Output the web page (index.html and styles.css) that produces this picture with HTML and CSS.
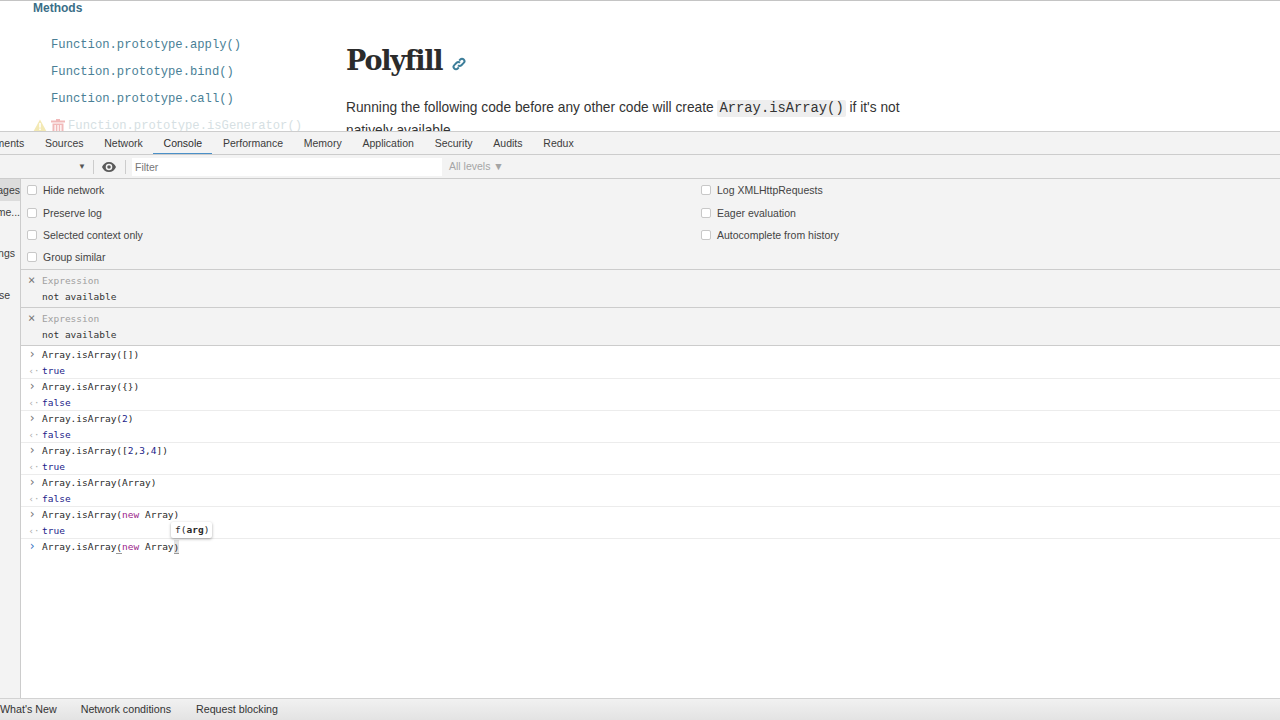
FILE: index.html
```html
<!DOCTYPE html>
<html lang="en">
<head>
<meta charset="utf-8">
<title>Array.isArray()</title>
<link rel="stylesheet" href="styles.css">
</head>
<body>
<section class="page">
  <aside class="toc">
    <h2 class="toc-title">Methods</h2>
    <ul class="toc-list">
      <li>Function.prototype.apply()</li>
      <li>Function.prototype.bind()</li>
      <li>Function.prototype.call()</li>
      <li class="deprecated">
        <svg class="i-warn" width="14" height="13" viewBox="0 0 14 13"><path d="M7 0.5 L13.6 12.5 H0.4 Z" fill="#f3e9b4"/><rect x="6.2" y="4" width="1.6" height="4.6" fill="#fff"/><rect x="6.2" y="9.5" width="1.6" height="1.6" fill="#fff"/></svg>
        <svg class="i-trash" width="14" height="15" viewBox="0 0 14 15"><path d="M5 0h4v1.500h5v2H0v-2h5zM1.500 4.500h11V15h-11zM3.500 6v7.500h1.300V6zM6.400 6v7.500h1.300V6zM9.200 6v7.500h1.300V6z" fill="#f1b9b9" fill-rule="evenodd"/></svg>
        <span class="dep-text">Function.prototype.isGenerator()</span>
      </li>
    </ul>
  </aside>
  <article class="doc">
    <h1 class="doc-title">Polyfill
      <svg class="i-link" width="14" height="14" viewBox="0 0 14 14" fill="none" stroke="#3d7e9a" stroke-width="2"><path d="M6 8.200a2.400 2.400 0 0 0 3.400 0l2.300-2.300a2.400 2.400 0 0 0-3.400-3.400L7.200 3.600"/><path d="M8 5.800a2.400 2.400 0 0 0-3.400 0L2.300 8.100a2.400 2.400 0 0 0 3.400 3.400l1.100-1.100"/></svg>
    </h1>
    <p class="doc-text">Running the following code before any other code will create <code class="chip">Array.isArray()</code> if it's not natively available.</p>
  </article>
</section>

<section class="devtools">
  <nav class="tabs">
    <span class="tab tab-first">Elements</span>
    <span class="tab">Sources</span>
    <span class="tab">Network</span>
    <span class="tab active">Console</span>
    <span class="tab">Performance</span>
    <span class="tab">Memory</span>
    <span class="tab">Application</span>
    <span class="tab">Security</span>
    <span class="tab">Audits</span>
    <span class="tab">Redux</span>
  </nav>
  <div class="toolbar">
    <span class="ctx-arrow">▼</span>
    <span class="sep"></span>
    <svg class="i-eye" width="14" height="10" viewBox="0 0 14 10"><path d="M7 0C3.800 0 1.200 2 0 5c1.200 3 3.800 5 7 5s5.800-2 7-5c-1.200-3-3.800-5-7-5zm0 8.300A3.300 3.300 0 1 1 7 1.700a3.300 3.300 0 0 1 0 6.600zM7 3.200a1.800 1.800 0 1 0 0 3.600 1.800 1.800 0 0 0 0-3.600z" fill="#5a5a5a"/></svg>
    <span class="sep"></span>
    <div class="filter">Filter</div>
    <span class="levels">All levels ▼</span>
  </div>
  <div class="console">
    <aside class="side">
      <div class="side-item selected">Messages</div>
      <div class="side-item">1 user me...</div>
      <div class="side-item warn">Warnings</div>
      <div class="side-item verb">Verbose</div>
    </aside>
    <div class="panel">
      <div class="settings">
        <div class="set-col">
          <label class="check"><span class="box"></span>Hide network</label>
          <label class="check"><span class="box"></span>Preserve log</label>
          <label class="check"><span class="box"></span>Selected context only</label>
          <label class="check"><span class="box"></span>Group similar</label>
        </div>
        <div class="set-col">
          <label class="check"><span class="box"></span>Log XMLHttpRequests</label>
          <label class="check"><span class="box"></span>Eager evaluation</label>
          <label class="check"><span class="box"></span>Autocomplete from history</label>
        </div>
      </div>
      <div class="watch">
        <div class="watch-line"><span class="x">×</span><span class="w-name">Expression</span></div>
        <div class="w-val">not available</div>
      </div>
      <div class="watch">
        <div class="watch-line"><span class="x">×</span><span class="w-name">Expression</span></div>
        <div class="w-val">not available</div>
      </div>
      <div class="log">
        <div class="entry">
          <div class="ln"><span class="pr">›</span>Array.isArray([])</div>
          <div class="ln"><span class="ret">‹·</span><span class="kw">true</span></div>
        </div>
        <div class="entry">
          <div class="ln"><span class="pr">›</span>Array.isArray({})</div>
          <div class="ln"><span class="ret">‹·</span><span class="kw">false</span></div>
        </div>
        <div class="entry">
          <div class="ln"><span class="pr">›</span>Array.isArray(<span class="kw">2</span>)</div>
          <div class="ln"><span class="ret">‹·</span><span class="kw">false</span></div>
        </div>
        <div class="entry">
          <div class="ln"><span class="pr">›</span>Array.isArray([<span class="kw">2</span>,<span class="kw">3</span>,<span class="kw">4</span>])</div>
          <div class="ln"><span class="ret">‹·</span><span class="kw">true</span></div>
        </div>
        <div class="entry">
          <div class="ln"><span class="pr">›</span>Array.isArray(Array)</div>
          <div class="ln"><span class="ret">‹·</span><span class="kw">false</span></div>
        </div>
        <div class="entry">
          <div class="ln"><span class="pr">›</span>Array.isArray(<span class="new">new</span> Array)</div>
          <div class="ln"><span class="ret">‹·</span><span class="kw">true</span></div>
        </div>
        <div class="prompt">
          <div class="ln"><span class="pr blue">›</span>Array.isArray<span class="match">(</span><span class="new">new</span> Array<span class="match close">)</span></div>
          <div class="hint">f(<b>arg</b>)</div>
        </div>
      </div>
    </div>
  </div>
  <footer class="drawer">
    <span class="d-tab d-first">What's New</span>
    <span class="d-tab">Network conditions</span>
    <span class="d-tab">Request blocking</span>
  </footer>
</section>
</body>
</html>
```

FILE: styles.css
```css
* { box-sizing: border-box; }
html, body { margin: 0; height: 100%; }
body {
  width: 1280px; height: 720px; overflow: hidden;
  display: flex; flex-direction: column;
  font-family: "Liberation Sans", Arial, sans-serif;
  background: #fff; color: #303030;
}
.page {
  height: 131px; flex: none; overflow: hidden;
  display: flex; border-top: 1px solid #c4c4c4;
}
.toc { width: 346px; flex: none; padding-left: 33px; }
.toc-title { margin: 0; font-size: 12px; line-height: 14px; font-weight: bold; color: #3a6e87; }
.toc-list { list-style: none; margin: 17px 0 0; padding: 0; font: 12.2px/27px "Liberation Mono", monospace; color: #4a7f96; }
.toc-list li { padding-left: 18px; height: 27px; white-space: nowrap; }
.toc-list .deprecated { padding-left: 0; display: flex; align-items: center; }
.i-warn { margin: 0 4px 3px 0; }
.i-trash { margin: 0 3px 1px 0; }
.dep-text { color: #d6dfe3; }
.doc { width: 560px; flex: none; }
.doc-title {
  margin: 40px 0 0; font: bold 27px/40px "DejaVu Serif", serif; color: #2b2b2b;
  letter-spacing: -1.2px; display: flex; align-items: center; gap: 10px; height: 40px;
}
.i-link { margin-top: 5px; }
.doc-text { margin: 15px 0 0; font-size: 13.75px; line-height: 23px; color: #333; width: 560px; }
.chip { font: 13.8px "Liberation Mono", monospace; background: #eee; padding: 1px 2px; border-radius: 2px; }

.devtools { flex: 1; min-height: 0; display: flex; flex-direction: column; background: #f3f3f3; border-top: 1px solid #cdcdcd; }
.tabs { height: 23px; flex: none; display: flex; font-size: 10.5px; border-bottom: 1px solid #ccc; color: #3c3c3c; overflow: hidden; }
.tab { padding: 0 10.400px; line-height: 22px; white-space: nowrap; }
.tab-first { margin-left: -30px; }
.tab.active { border-bottom: 2px solid #4a90c8; height: 23px; color: #2e2e2e; }
.toolbar { height: 24px; flex: none; display: flex; align-items: center; border-bottom: 1px solid #ccc; font-size: 10.5px; color: #9a9a9a; }
.ctx-arrow { margin-left: 78px; font-size: 8px; color: #555; width: 15px; }
.sep { width: 1px; height: 14px; background: #ccc; }
.i-eye { margin: 0 9px 0 8px; }
.filter { width: 310px; height: 18px; margin-left: 6px; background: #fff; padding-left: 3px; line-height: 18px; color: #777; }
.levels { margin: 0 0 2px 7px; color: #a5a5a5; }

.console { flex: 1; min-height: 0; display: flex; }
.side { width: 21px; flex: none; border-right: 1px solid #ccc; font-size: 10.5px; color: #3c3c3c; }
.side-item { height: 22px; line-height: 22px; white-space: nowrap; display: flex; justify-content: flex-end; overflow: hidden; }
.side-item.selected { background: #dcdcdc; }
.side-item.warn { margin-top: 19px; padding-right: 5px; }
.side-item.verb { margin-top: 20px; padding-right: 10px; }
.panel { flex: 1; min-width: 0; background: #fff; display: flex; flex-direction: column; }
.settings { height: 91px; flex: none; display: grid; grid-template-columns: 674px 1fr; background: #f3f3f3; border-bottom: 1px solid #ccc; }
.set-col { display: flex; flex-direction: column; }
.check { height: 22.400px; display: flex; align-items: center; font-size: 10.5px; color: #444; padding-left: 6px; }
.box { width: 10px; height: 10px; margin-right: 6px; background: #fff; border: 1px solid #c8c8c8; border-radius: 2px; }
.watch { height: 38px; flex: none; background: #f3f3f3; border-bottom: 1px solid #ccc; padding-top: 3px; font: 9.500px/15px "DejaVu Sans Mono", monospace; }
.watch-line { display: flex; height: 15.500px; }
.x { width: 21px; padding-left: 7px; color: #777; font-size: 12px; }
.w-name { color: #a0a0a0; }
.w-val { padding-left: 21px; color: #333; }
.log { flex: 1; padding-top: 1px; font: 9.500px/16px "DejaVu Sans Mono", monospace; color: #2a2a2a; }
.entry { height: 32px; border-bottom: 1px solid #ececec; }
.ln { height: 16px; white-space: nowrap; }
.pr { display: inline-block; width: 21px; padding-left: 7.500px; color: #777; font-size: 12px; line-height: 14px; }
.pr.blue { color: #3b78c4; }
.ret { display: inline-block; width: 21px; padding-left: 7.500px; color: #aaa; font-size: 9px; }
.kw { color: #1c1c8a; }
.new { color: #9b1f8c; }
.match { display: inline-block; border-bottom: 1px solid #999; height: 14px; line-height: 15px; vertical-align: top; margin-top: 1px; }
.match.close { background: #e4e4e4; }
.prompt { position: relative; }
.hint { position: absolute; left: 150px; top: -17px; height: 16px; width: 41px; background: #fff; padding-left: 4px; line-height: 15px; box-shadow: 0 1px 3px rgba(0,0,0,.35); border-radius: 2px; }
.drawer { height: 22px; flex: none; display: flex; font-size: 10.7px; line-height: 21px; color: #333; background: linear-gradient(#f1f1f1, #e3e3e3); border-top: 1px solid #d2d2d2; }
.d-tab { margin-right: 25px; white-space: nowrap; }
.d-first { margin-right: 24px; }
```
